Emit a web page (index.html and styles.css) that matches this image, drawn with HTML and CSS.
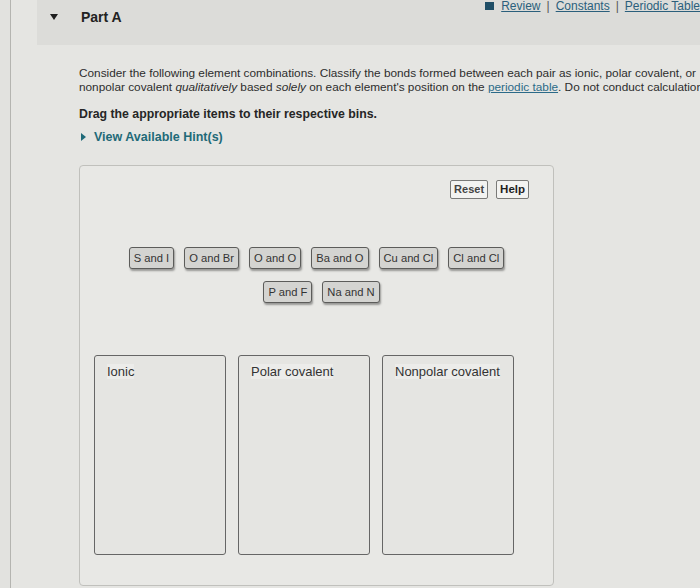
FILE: index.html
```html
<!DOCTYPE html>
<html>
<head>
<meta charset="utf-8">
<link rel="stylesheet" href="styles.css">
</head>
<body>
<div class="page">
  <div class="gutter"></div>
  <div class="main">
    <div class="part-header">
      <div class="part-title"><span class="tri-down"></span><span class="part-name">Part A</span></div>
      <div class="toplinks">
        <span class="book"></span><a class="lnk">Review</a><span class="sep">|</span><a class="lnk">Constants</a><span class="sep">|</span><a class="lnk">Periodic Table</a>
      </div>
    </div>
    <div class="content">
      <p class="intro">Consider the following element combinations. Classify the bonds formed between each pair as ionic, polar covalent, or<br>nonpolar covalent <i>qualitatively</i> based <i>solely</i> on each element's position on the <a class="inlink">periodic table</a>. Do not conduct calculations.</p>
      <p class="instr">Drag the appropriate items to their respective bins.</p>
      <div class="hint"><span class="tri-right"></span>View Available Hint(s)</div>
      <div class="dnd">
        <div class="tools">
          <button class="tbtn reset">Reset</button>
          <button class="tbtn help">Help</button>
        </div>
        <div class="pool">
          <div class="row">
            <span class="chip">S and I</span>
            <span class="chip">O and Br</span>
            <span class="chip">O and O</span>
            <span class="chip">Ba and O</span>
            <span class="chip">Cu and Cl</span>
            <span class="chip">Cl and Cl</span>
          </div>
          <div class="row row2">
            <span class="chip">P and F</span>
            <span class="chip">Na and N</span>
          </div>
        </div>
        <div class="bins">
          <div class="bin"><span class="bin-label">Ionic</span></div>
          <div class="bin"><span class="bin-label">Polar covalent</span></div>
          <div class="bin"><span class="bin-label">Nonpolar covalent</span></div>
        </div>
      </div>
    </div>
  </div>
</div>
</body>
</html>
```
FILE: styles.css
```css
html, body {
  margin: 0;
  padding: 0;
  height: 588px;
  overflow: hidden;
  background: #e5e5e2;
  font-family: "Liberation Sans", Arial, sans-serif;
  color: #2f2f2f;
}
.page {
  display: flex;
  width: 760px;
  height: 588px;
}
.gutter {
  width: 10px;
  border-right: 1px solid #b4b4b0;
  background: #e2e2df;
  flex: none;
}
.main {
  flex: 1;
  display: flex;
  flex-direction: column;
}
.part-header {
  margin-left: 26px;
  height: 45px;
  flex: none;
  background: #dcdcd9;
  display: flex;
  justify-content: space-between;
  align-items: flex-start;
  width: 663px;
}
.part-title {
  display: flex;
  align-items: center;
  padding-left: 13px;
  padding-top: 9px;
}
.tri-down {
  width: 0;
  height: 0;
  border-left: 4px solid transparent;
  border-right: 4px solid transparent;
  border-top: 6px solid #1e1e1e;
  margin-right: 23px;
}
.part-name {
  font-size: 14px;
  font-weight: bold;
  color: #222;
}
.toplinks {
  display: flex;
  align-items: center;
  font-size: 12px;
  margin-top: -1px;
}
.book {
  width: 9px;
  height: 8px;
  background: #1f4e66;
  margin-right: 7px;
}
.lnk {
  color: #2b5f7c;
  text-decoration: underline;
}
.sep {
  color: #555;
  margin: 0 6px;
}
.content {
  padding-left: 68px;
  padding-top: 21px;
}
.intro {
  margin: 0;
  white-space: nowrap;
  font-size: 11.8px;
  line-height: 14px;
  color: #2d2d2d;
}
.inlink {
  color: #2b6a88;
  text-decoration: underline;
}
.instr {
  margin: 13px 0 0 0;
  font-size: 12.3px;
  font-weight: bold;
  color: #262626;
}
.hint {
  display: flex;
  align-items: center;
  margin-top: 9px;
  font-size: 12.5px;
  font-weight: bold;
  color: #1f6a78;
}
.tri-right {
  width: 0;
  height: 0;
  border-top: 4px solid transparent;
  border-bottom: 4px solid transparent;
  border-left: 5px solid #1f6a78;
  margin-left: 2px;
  margin-right: 8px;
}
.dnd {
  margin-top: 21px;
  width: 475px;
  box-sizing: border-box;
  border: 1px solid #c0c0bc;
  border-radius: 4px;
  background: #e8e8e5;
  padding: 14px 24px 30px 14px;
}
.tools {
  display: flex;
  justify-content: flex-end;
  gap: 8px;
}
.tbtn {
  font-family: "Liberation Sans", Arial, sans-serif;
  font-size: 11px;
  font-weight: bold;
  background: #f3f3f1;
  border: 1px solid #7a7a78;
  border-radius: 2px;
  padding: 0 3px;
  height: 19px;
  line-height: 17px;
  color: #444;
}
.help { color: #1f1f1f; font-size: 11.5px; }
.pool {
  margin-top: 48px;
  display: flex;
  flex-direction: column;
  align-items: center;
  gap: 12px;
  margin-left: 10px;
}
.row {
  display: flex;
  gap: 10px;
}
.row2 { margin-left: 10px; }
.chip {
  display: inline-block;
  height: 22px;
  line-height: 20px;
  box-sizing: border-box;
  padding: 0 4px;
  font-size: 11.2px;
  color: #333;
  background: #d4d4d1;
  border: 1px solid #5c5c5a;
  border-radius: 3px;
  box-shadow: 1px 2px 2px rgba(0,0,0,0.35);
}
.bins {
  margin-top: 52px;
  display: flex;
  gap: 12px;
}
.bin {
  width: 132px;
  height: 200px;
  box-sizing: border-box;
  border: 1px solid #666;
  border-radius: 3px;
  background: #e5e5e2;
  padding: 6px 12px;
}
.bin-label {
  font-size: 13px;
  color: #333;
  background: #ececea;
}
```
